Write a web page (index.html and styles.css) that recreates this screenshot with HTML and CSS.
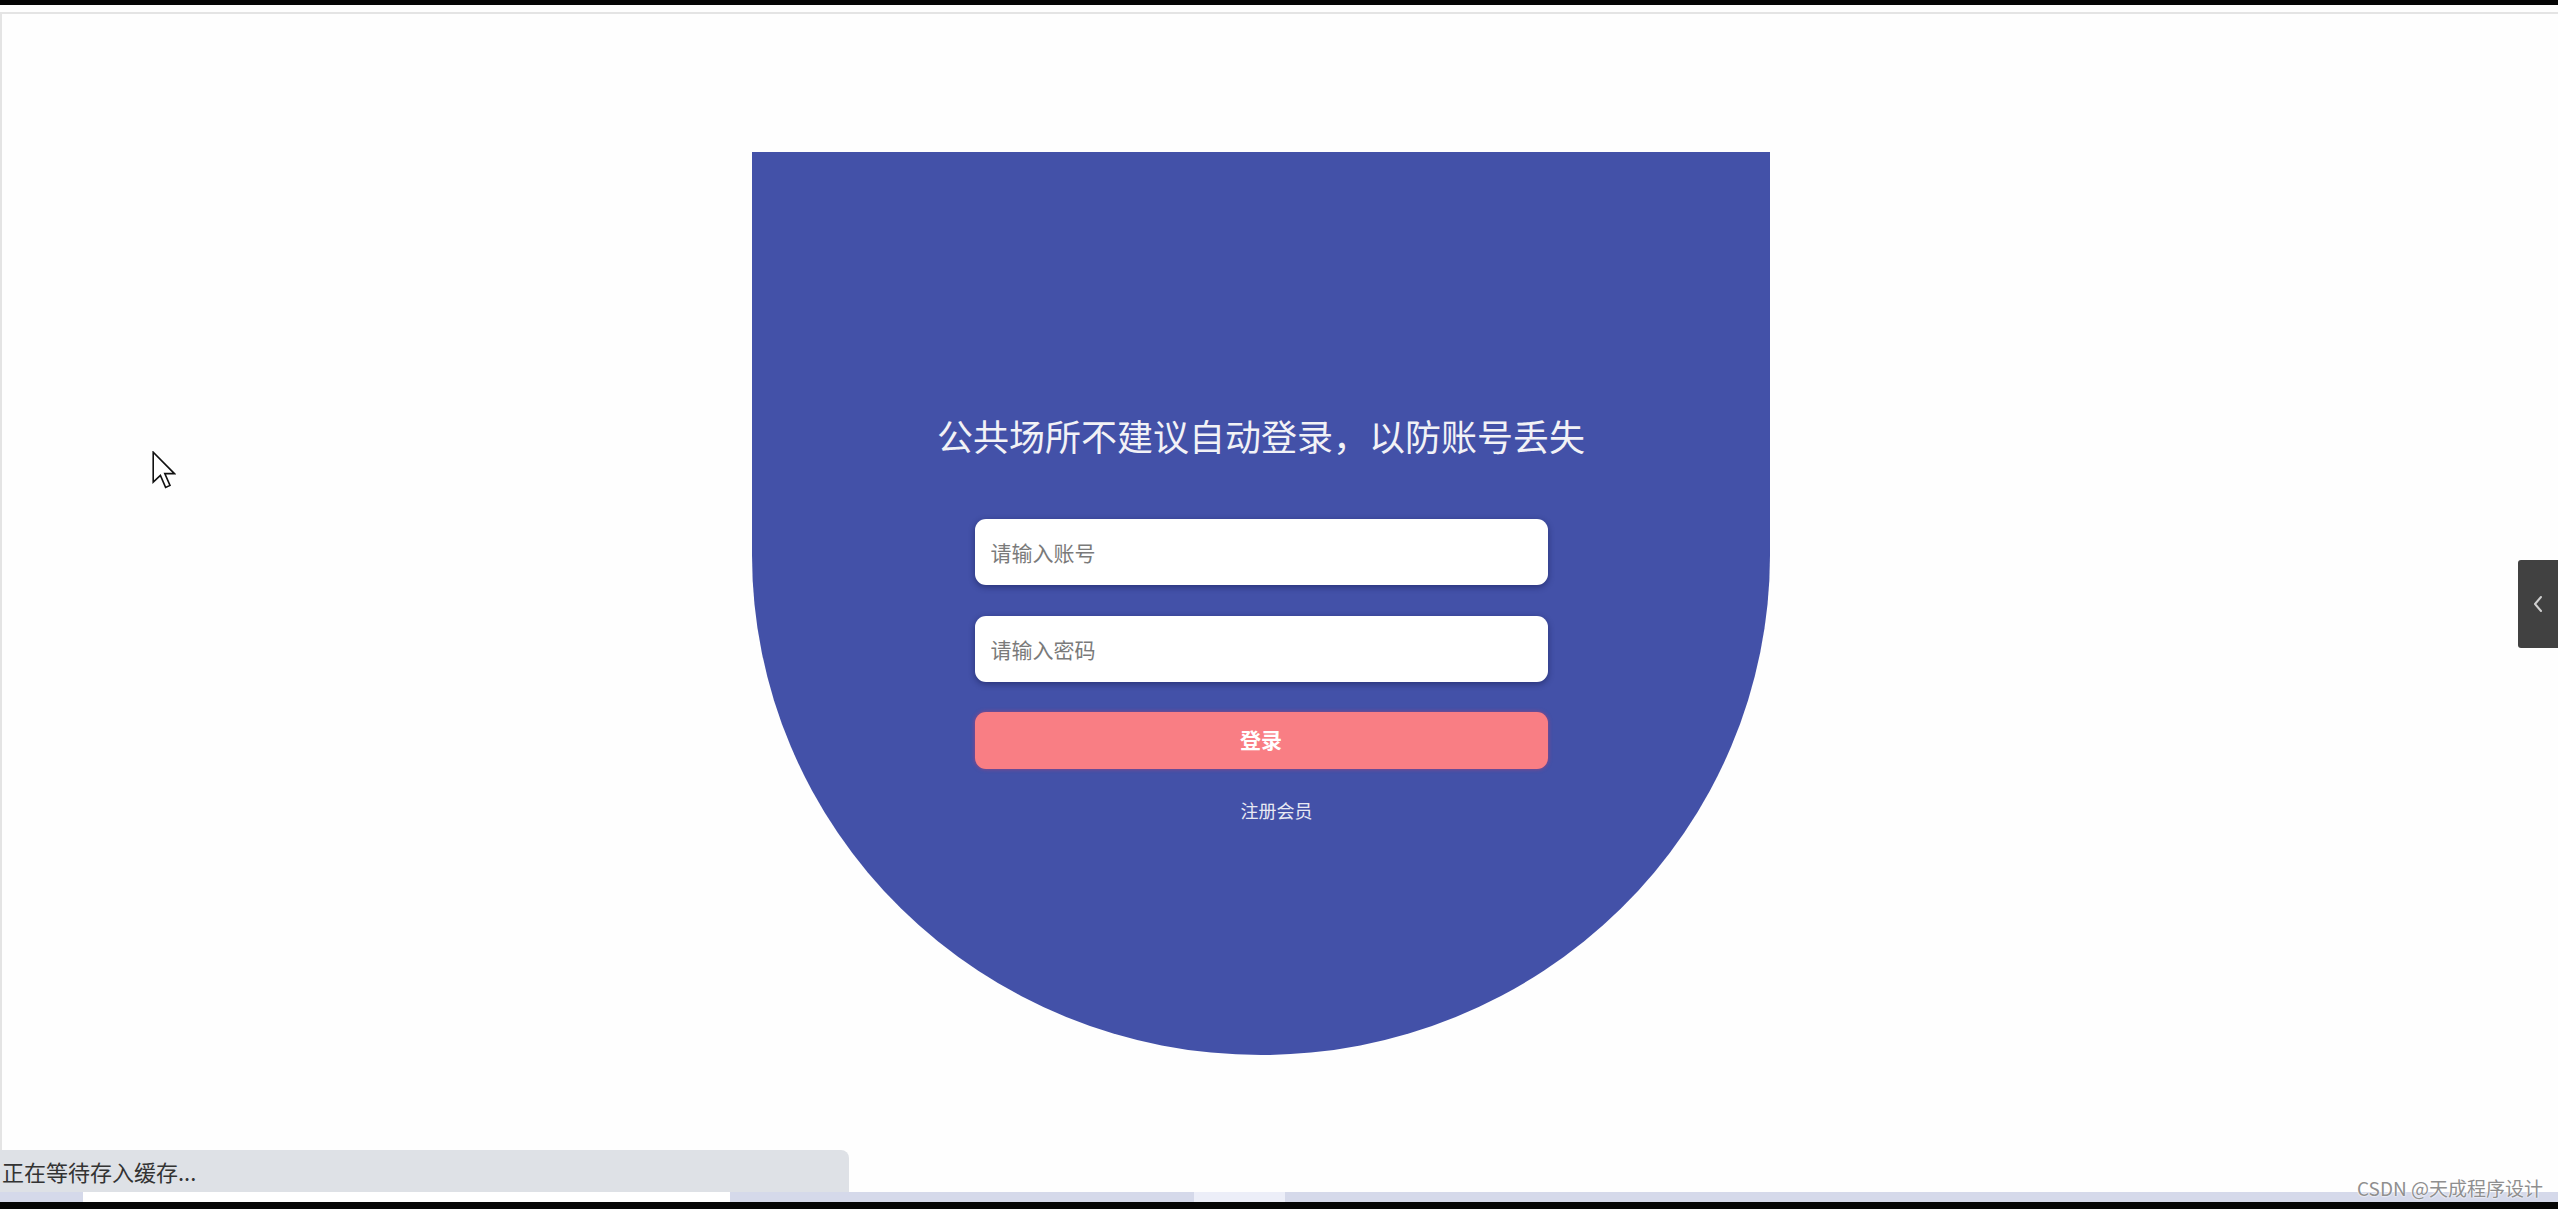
FILE: index.html
```html
<!DOCTYPE html>
<html lang="zh-CN">
<head>
<meta charset="utf-8">
<title>登录</title>
<link rel="stylesheet" href="styles.css">
</head>
<body>
  <div class="rec-top"></div>
  <div class="rec-gap"></div>
  <div class="viewport">
    <main class="stage">
      <section class="card">
        <h1 class="tip">公共场所不建议自动登录，以防账号丢失</h1>
        <form class="login">
          <input class="field" type="text" placeholder="请输入账号">
          <input class="field" type="password" placeholder="请输入密码">
          <button class="submit" type="button">登录</button>
          <a class="register" href="#">注册会员</a>
        </form>
      </section>
    </main>

    <div class="side-tab">
      <svg width="10" height="18" viewBox="0 0 10 18"><polyline points="8,2 2,9 8,16" fill="none" stroke="#cfcfcf" stroke-width="2" stroke-linecap="round" stroke-linejoin="round"/></svg>
    </div>

    <svg class="cursor" width="24" height="38" viewBox="0 0 12 19"><path d="M0.6 0.6 L0.6 15.6 L4.2 12.2 L6.8 18.2 L9 17.2 L6.4 11.3 L11.2 11.3 Z" fill="#ffffff" stroke="#111111" stroke-width="0.8" stroke-linejoin="miter"/></svg>

    <div class="status">正在等待存入缓存...</div>
  </div>
  <div class="taskstrip">
    <span class="seg seg-a"></span>
    <span class="seg seg-white"></span>
    <span class="seg seg-a"></span>
    <span class="seg seg-light"></span>
    <span class="seg seg-a"></span>
  </div>
  <div class="rec-bottom"></div>
  <div class="watermark">CSDN @天成程序设计</div>
</body>
</html>
```

FILE: styles.css
```css
html, body {
  margin: 0;
  padding: 0;
}

body {
  position: relative;
  width: 2558px;
  height: 1209px;
  overflow: hidden;
  background: #fefefe;
  font-family: "Noto Sans CJK SC", "Liberation Sans", sans-serif;
}

.rec-top {
  height: 5px;
  background: #050505;
}

.rec-gap {
  height: 7px;
  background: #fefefe;
}

.viewport {
  position: relative;
  height: 1178px;
  border-top: 2px solid #e4e4e4;
  border-left: 2px solid #e4e4e4;
  background: #fefefe;
}

.stage {
  display: flex;
  padding: 138px 0 0 750px;
}

.card {
  width: 1018px;
  height: 903px;
  box-sizing: border-box;
  background: #4351a8;
  border-radius: 0 0 509px 509px / 0 0 500px 500px;
  display: flex;
  flex-direction: column;
  align-items: center;
  padding-top: 261px;
}

.tip {
  margin: 0;
  font-size: 36px;
  line-height: 44px;
  font-weight: 400;
  color: #f2f2f6;
  letter-spacing: 0;
}

.login {
  margin-top: 62px;
  width: 573px;
  display: flex;
  flex-direction: column;
  gap: 31px;
}

.field {
  height: 66px;
  box-sizing: border-box;
  border: none;
  outline: none;
  border-radius: 11px;
  background: #ffffff;
  padding: 0 16px;
  font-family: "Noto Sans CJK SC", sans-serif;
  font-size: 21px;
  color: #333;
  box-shadow: 0 2px 6px rgba(10, 15, 60, 0.45);
}

.field::placeholder {
  color: #7a7a7a;
}

.submit {
  height: 57px;
  margin-top: -1px;
  padding: 0 0 4px;
  border: none;
  border-radius: 11px;
  background: #f97e84;
  color: #ffffff;
  font-family: "Noto Sans CJK SC", sans-serif;
  font-size: 21px;
  font-weight: 700;
  box-shadow: 0 0 4px rgba(230, 60, 90, 0.55);
  cursor: pointer;
}

.register {
  align-self: center;
  margin-top: -2px;
  padding-left: 31px;
  font-size: 18px;
  line-height: 24px;
  color: #e8e9f3;
  text-decoration: none;
}

.side-tab {
  position: absolute;
  right: 0;
  top: 546px;
  width: 40px;
  height: 88px;
  background: #414141;
  border-radius: 3px 0 0 3px;
  display: flex;
  align-items: center;
  justify-content: center;
}

.cursor {
  position: absolute;
  left: 150px;
  top: 437px;
}

.status {
  position: absolute;
  left: -2px;
  bottom: 0;
  width: 847px;
  height: 42px;
  padding-left: 2px;
  background: #dee1e6;
  border-radius: 0 8px 0 0;
  font-size: 22px;
  line-height: 42px;
  color: #333333;
}

.taskstrip {
  display: grid;
  grid-template-columns: 83px 647px 464px 91px 1fr;
  height: 10px;
}

.seg-a {
  background: #d5d9ea;
}

.seg-white {
  background: #ffffff;
}

.seg-light {
  background: #eceef8;
}

.rec-bottom {
  height: 7px;
  background: #050505;
}

.watermark {
  position: absolute;
  right: 15px;
  bottom: 10px;
  font-size: 19px;
  line-height: 22px;
  color: #8f8f8f;
  text-shadow: 0 0 2px #ffffff, 0 0 2px #ffffff;
}
```
